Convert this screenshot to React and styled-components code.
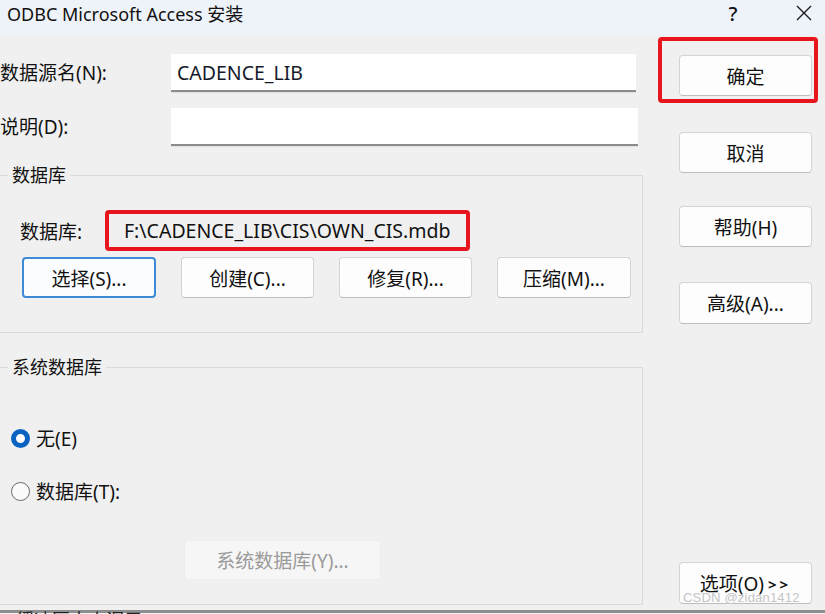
import React from 'react';
import styled, { createGlobalStyle } from 'styled-components';

const Global = createGlobalStyle`
  html, body { margin: 0; padding: 0; }
  body {
    width: 825px;
    height: 614px;
    overflow: hidden;
    background: #f0f0f0;
    font-family: "Noto Sans", "Noto Sans CJK SC", sans-serif;
    color: #111;
  }
`;

const Window = styled.div`
  position: relative;
  width: 825px;
  height: 614px;
  display: flex;
  flex-direction: column;
  overflow: hidden;
`;

const TitleBar = styled.div`
  height: 35px;
  flex: 0 0 35px;
  background: #eef2f9;
  display: flex;
  align-items: center;
  padding-left: 7px;
  font-size: 18px;
`;

const Title = styled.div`
  flex: 1;
  margin-top: -9px;
`;

const TitleBtn = styled.div`
  width: ${p => p.w}px;
  margin-right: ${p => p.mr || 0}px;
  display: flex;
  justify-content: center;
  align-items: center;
  margin-top: -9px;
  font-size: 20px;
  font-weight: 500;
`;

const Main = styled.div`
  height: 570px;
  display: flex;
`;

const LeftCol = styled.div`
  width: 643px;
  padding-top: 19px;
  display: flex;
  flex-direction: column;
`;

const FieldRow = styled.div`
  display: flex;
  align-items: center;
  margin-bottom: ${p => p.mb || 0}px;
`;

const Label = styled.div`
  width: 171px;
  font-size: 19px;
  padding-bottom: 2px;
`;

const TextInput = styled.div`
  width: ${p => p.w}px;
  height: 38px;
  box-sizing: border-box;
  background: #fff;
  border-bottom: 2px solid #8c8c8c;
  box-shadow: 0 1px 1px rgba(0,0,0,0.06);
  display: flex;
  align-items: center;
  padding-left: 6px;
  font-size: 19.5px;
  color: #141a2a;
`;

const Group = styled.div`
  box-sizing: border-box;
  height: ${p => p.h}px;
  margin-top: ${p => p.mt}px;
  border: 1px solid #dadada;
  border-left: none;
  display: flex;
  flex-direction: column;
`;

const GroupTitle = styled.div`
  align-self: flex-start;
  margin: -13px 0 0 8px;
  padding: 0 4px;
  height: 24px;
  line-height: 24px;
  background: #f0f0f0;
  font-size: 18px;
`;

const DbRow = styled.div`
  display: flex;
  align-items: center;
  margin-top: 23px;
  padding-left: 20px;
`;

const DbLabel = styled.div`
  width: 85px;
  font-size: 19px;
`;

const RedBox = styled.div`
  box-sizing: border-box;
  border: 4px solid #e8141e;
  border-radius: 4px;
  padding: ${p => p.pad || '0'};
  margin: ${p => p.m || '0'};
  display: ${p => (p.inline ? 'flex' : 'block')};
  align-items: center;
  width: ${p => (p.w ? `${p.w}px` : 'auto')};
  height: ${p => (p.h ? `${p.h}px` : 'auto')};
`;

const PathText = styled.span`
  font-size: 19.5px;
  padding-left: 15px;
  white-space: nowrap;
`;

const ButtonRow = styled.div`
  display: flex;
  gap: 25px;
  margin-top: 6px;
  padding-left: 22px;
`;

const Button = styled.div`
  box-sizing: border-box;
  width: ${p => p.w || 133}px;
  height: ${p => p.h || 41}px;
  border-radius: 4px;
  background: ${p => (p.focused ? '#fbfcfe' : p.disabled ? '#f6f6f6' : '#fdfdfd')};
  border: ${p => (p.focused ? '2px solid #3d8bd6' : p.disabled ? '1px solid #ececec' : '1px solid #d4d4d4')};
  border-bottom-color: ${p => (p.focused ? '#3d8bd6' : p.disabled ? '#ececec' : '#bdbdbd')};
  display: flex;
  align-items: center;
  justify-content: center;
  font-size: 19px;
  color: ${p => (p.disabled ? '#9a9a9a' : '#111')};
  margin-top: ${p => p.mt || 0}px;
  margin-left: ${p => p.ml || 0}px;
  flex-shrink: 0;
`;

const Chevrons = styled.span`
  font-size: 15px;
  font-weight: 700;
  letter-spacing: 3px;
  margin-left: 4px;
  margin-top: 2px;
`;

const RadioRow = styled.label`
  display: flex;
  align-items: center;
  gap: 6px;
  padding-left: 11px;
  margin-top: ${p => p.mt}px;
  font-size: 19px;
  height: 24px;
`;

const RadioDot = styled.span`
  box-sizing: border-box;
  width: 19px;
  height: 19px;
  border-radius: 50%;
  background: ${p => (p.checked ? '#fff' : '#fafafa')};
  border: ${p => (p.checked ? '5px solid #0a63c1' : '1.5px solid #6a6a6a')};
`;

const RightCol = styled.div`
  flex: 1;
  display: flex;
  flex-direction: column;
  padding-left: 15px;
`;

const RightBtns = styled.div`
  display: flex;
  flex-direction: column;
  padding-left: 21px;
  flex: 1;
`;

const Footer = styled.div`
  height: 9px;
  flex: 0 0 9px;
  position: relative;
  overflow: hidden;
`;

const FooterLine = styled.div`
  margin-top: 5px;
  height: 3px;
  background: #8e8e8e;
`;

const FooterText = styled.div`
  padding-left: 16px;
  font-size: 18px;
  line-height: 18px;
  color: #222;
  margin-top: -2px;
`;

const Watermark = styled.div`
  position: absolute;
  left: 683px;
  top: 590px;
  font-size: 13px;
  letter-spacing: 0.2px;
  color: #c4c4c4;
  font-family: "Liberation Sans", Arial, sans-serif;
  text-shadow: 0 0 1px #fff;
`;

function CloseIcon() {
  return (
    <svg width="18" height="18" viewBox="0 0 18 18">
      <path d="M2 2L16 16M16 2L2 16" stroke="#1b1b1b" strokeWidth="1.4" fill="none" />
    </svg>
  );
}

export default function App() {
  return (
    <>
      <Global />
      <Window>
        <TitleBar>
          <Title>ODBC Microsoft Access 安装</Title>
          <TitleBtn w={40} mr={30}>?</TitleBtn>
          <TitleBtn w={42}><CloseIcon /></TitleBtn>
        </TitleBar>
        <Main>
          <LeftCol>
            <FieldRow mb={16}>
              <Label>数据源名(N):</Label>
              <TextInput w={465}>CADENCE_LIB</TextInput>
            </FieldRow>
            <FieldRow>
              <Label>说明(D):</Label>
              <TextInput w={467} />
            </FieldRow>

            <Group mt={29} h={158}>
              <GroupTitle>数据库</GroupTitle>
              <DbRow>
                <DbLabel>数据库:</DbLabel>
                <RedBox inline w={365} h={41}>
                  <PathText>F:\CADENCE_LIB\CIS\OWN_CIS.mdb</PathText>
                </RedBox>
              </DbRow>
              <ButtonRow>
                <Button focused w={134}>选择(S)...</Button>
                <Button>创建(C)...</Button>
                <Button>修复(R)...</Button>
                <Button w={134}>压缩(M)...</Button>
              </ButtonRow>
            </Group>

            <Group mt={34} h={238}>
              <GroupTitle>系统数据库</GroupTitle>
              <RadioRow mt={47}>
                <RadioDot checked />
                无(E)
              </RadioRow>
              <RadioRow mt={29}>
                <RadioDot />
                数据库(T):
              </RadioRow>
              <Button disabled w={197} h={40} mt={37} ml={184}>系统数据库(Y)...</Button>
            </Group>
          </LeftCol>

          <RightCol>
            <RedBox m="2px 0 0 0" pad="14px 2px 3px 17px" w={160}>
              <Button>确定</Button>
            </RedBox>
            <RightBtns>
              <Button mt={29}>取消</Button>
              <Button mt={33}>帮助(H)</Button>
              <Button mt={35} h={42}>高级(A)...</Button>
              <Button mt={238} h={42}>选项(O)<Chevrons>&gt;&gt;</Chevrons></Button>
            </RightBtns>
          </RightCol>
        </Main>
        <Footer>
          <FooterLine />
          <FooterText>缓冲区大小调用</FooterText>
        </Footer>
        <Watermark>CSDN @zidan1412</Watermark>
      </Window>
    </>
  );
}
